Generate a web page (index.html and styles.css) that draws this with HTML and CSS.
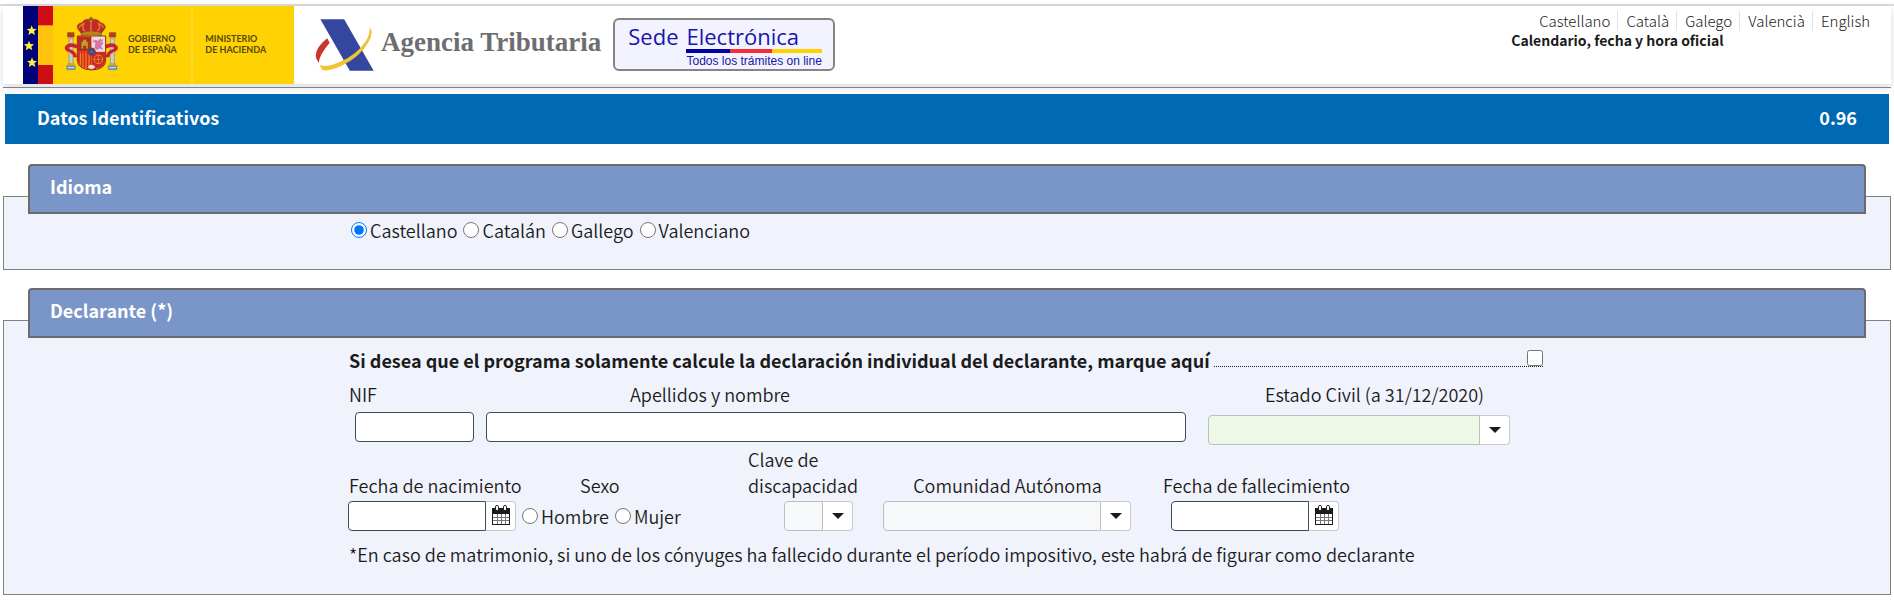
FILE: index.html
```html
<!DOCTYPE html>
<html lang="es">
<head>
<meta charset="utf-8">
<title>Datos Identificativos - Agencia Tributaria</title>
<link rel="stylesheet" href="styles.css">
</head>
<body>
<div class="page">
  <header class="masthead">
    <svg class="logo-gobierno" viewBox="69 18 813 234" role="img" aria-label="Gobierno de España, Ministerio de Hacienda">
      <rect x="69" y="18" width="813" height="234" fill="#ffd204"/>
      <rect x="69" y="18" width="45" height="234" fill="#000078"/>
      <rect x="114" y="18" width="45" height="234" fill="#cd0e14"/>
      <rect x="114" y="76" width="45" height="119" fill="#ffc20e"/>
      <g fill="#ffee3c">
        <path id="star" d="M95 76l4 10 11 1-8 7 3 11-10-6-10 6 3-11-8-7 11-1z"/>
        <use href="#star" x="-8" y="46"/>
        <use href="#star" x="1" y="96"/>
      </g>
      <rect x="574" y="18" width="4" height="234" fill="#ffdc3c"/>
      <g stroke="#6d4a12" stroke-width="1.5">
        <path d="M246 104l-14-20q-2-14 14-16 8-14 27-9 19-5 28 9 15 2 15 16l-15 20q-27-8-55 0z" fill="#c9262b"/>
        <path d="M244 98q29-10 60 0v9q-30-7-60 0z" fill="#b9851c"/>
        <path d="M273 94V62M255 94q-13-12-2-25M292 94q13-12 2-25M237 83q4-9 14-12M311 83q-4-9-14-12" fill="none" stroke="#c98c25" stroke-width="4"/>
        <path d="M273 50v14M267 55h12" stroke="#7a5a18" stroke-width="3"/>
        <circle cx="273" cy="64" r="4" fill="#d9a11c"/>
      </g>
      <g>
        <path id="pillar" d="M207 112h12v80h-12z" fill="#c9ced0" stroke="#7d868c" stroke-width="2"/>
        <use href="#pillar" x="124"/>
        <path d="M203 98h19v13h-19zM328 98h19v13h-19z" fill="#c8322c" stroke="#74500f" stroke-width="2"/>
        <path d="M204 112h17v6h-17zM329 112h17v6h-17z" fill="#dca626"/>
        <path d="M203 190h20v6h-20zM328 190h20v6h-20z" fill="#d9a11c"/>
        <path d="M200 197h26v12h-26zM325 197h26v12h-26z" fill="#6c94b8" stroke="#4d6c8c"/>
        <path d="M203 203h20M328 203h20" stroke="#dceaf3" stroke-width="3"/>
        <path d="M232 141q-17-10-28-3-10 8 4 14 16 6 18 20M316 141q17-10 28-3 10 8-4 14-16 6-18 20" fill="none" stroke="#c9242c" stroke-width="11"/>
        <path d="M205 156l13 9M343 156l-13 9" stroke="#f1b9a6" stroke-width="3"/>
      </g>
      <path d="M232 108h85v72q0 28-42 30-43-2-43-30z" fill="#d3a51d" stroke="#8b2a1c" stroke-width="3"/>
      <path d="M234 110h40v45h-40z" fill="#c8232b"/>
      <path d="M275 110h40v45h-40z" fill="#eadfe4"/>
      <path d="M234 156h40v52q-40-3-40-28z" fill="#d9261f"/>
      <path d="M275 156h40v24q0 25-40 28z" fill="#d0272a"/>
      <path d="M243 147v-23h5v-6h12v6h5v23h-8v-9h-6v9z" fill="#c99a26" stroke="#67430f" stroke-width="2"/>
      <path d="M285 144q4-15 1-23l8 3 8-8 3 7-8 7 12-1-7 9 6 10-10-4-6 5zM280 119l6 5-6 3M309 117l-4 17" fill="#dd74a8" stroke="#c7629a" stroke-width="2"/>
      <path d="M241 158v38M249 158v45M258 158v48M267 158v50" stroke="#efa01b" stroke-width="3"/>
      <circle cx="295" cy="178" r="13" fill="none" stroke="#df9120" stroke-width="3"/>
      <path d="M295 166v24M283 178h24" stroke="#e49b20" stroke-width="2"/>
      <circle cx="275" cy="155" r="11" fill="#23539c" stroke="#b92535" stroke-width="3"/>
      <circle cx="275" cy="155" r="4" fill="#50833e"/>
      <path d="M263 201q12-14 23 0-11 12-23 0z" fill="#eee2c7"/>
      <g class="ministry-name">
        <text x="384" y="127">GOBIERNO</text>
        <text x="384" y="158">DE ESPAÑA</text>
        <text x="616" y="127">MINISTERIO</text>
        <text x="616" y="158">DE HACIENDA</text>
      </g>
    </svg>
    <a class="agency" href="#">
      <svg class="agency-mark" viewBox="46 52 176 160" aria-hidden="true">
        <path d="M82 112q-41 34-32 60l7 14q2-26 33-61z" fill="#c6362e"/>
        <path d="M62 55h71l88 154h-71z" fill="#35469f"/>
        <path d="M208 78q15 15-2 45-26 45-82 72-41 18-57 11l-8-14q22 8 62-10 50-22 75-60 16-23 12-44z" fill="#edc437"/>
      </svg>
      <span class="agency-name">Agencia Tributaria</span>
    </a>
    <a class="sede" href="#">
      <span class="sede-title">Sede</span>
      <span class="sede-main">
        <span class="sede-title">Electrónica</span>
        <span class="sede-stripe"></span>
        <span class="sede-tagline">Todos los trámites on line</span>
      </span>
    </a>
    <div class="tools">
      <nav class="languages" aria-label="Idiomas">
        <a href="#">Castellano</a>
        <a href="#">Català</a>
        <a href="#">Galego</a>
        <a href="#">Valencià</a>
        <a href="#">English</a>
      </nav>
      <a class="calendar-link" href="#">Calendario, fecha y hora oficial</a>
    </div>
  </header>

  <main>
    <div class="title-bar">
      <h1>Datos Identificativos</h1>
      <span>0.96</span>
    </div>

    <section class="panel">
      <h2>Idioma</h2>
      <div class="panel-body radios" role="radiogroup" aria-label="Idioma">
        <label><input type="radio" name="idioma" checked>Castellano</label>
        <label><input type="radio" name="idioma">Catalán</label>
        <label><input type="radio" name="idioma">Gallego</label>
        <label><input type="radio" name="idioma">Valenciano</label>
      </div>
    </section>

    <section class="panel">
      <h2>Declarante (*)</h2>
      <form class="panel-body">
        <div class="single-return">
          <label for="individual">Si desea que el programa solamente calcule la declaración individual del declarante, marque aquí</label>
          <span class="leader"><input type="checkbox" id="individual"></span>
        </div>

        <div class="row identity">
          <div class="field nif">
            <label for="nif">NIF</label>
            <input type="text" id="nif">
          </div>
          <div class="field name">
            <label for="nombre">Apellidos y nombre</label>
            <input type="text" id="nombre">
          </div>
          <div class="field status">
            <label for="estado">Estado Civil (a 31/12/2020)</label>
            <div class="combo required">
              <select id="estado"><option></option></select>
              <button type="button" aria-label="Abrir estado civil"><svg class="arrow" viewBox="0 0 12 6"><path d="M0 0h12L6 6z"/></svg></button>
            </div>
          </div>
        </div>

        <div class="row details">
          <div class="field">
            <label for="nacimiento">Fecha de nacimiento</label>
            <div class="combo date">
              <input type="text" id="nacimiento">
              <button type="button" aria-label="Elegir fecha de nacimiento"><svg class="calendar" viewBox="0 0 18 20"><path d="M0 3h18v17H0z" fill="#1b1b1b"/><path d="M1 9h16v10H1z" fill="#fff"/><path d="M5.500 9v10M9.500 9v10M13.500 9v10M1 12.500h16M1 15.500h16" stroke="#777"/><path d="M3.500 1.500q0-1 1.500-1t1.500 1v3q0 1-1.500 1t-1.500-1zM11.500 1.500q0-1 1.500-1t1.500 1v3q0 1-1.500 1t-1.500-1z" fill="#fff" stroke="#1b1b1b"/></svg></button>
            </div>
          </div>
          <div class="field sex" role="radiogroup" aria-labelledby="sexo">
            <span class="caption" id="sexo">Sexo</span>
            <div class="radios">
              <label><input type="radio" name="sexo">Hombre</label>
              <label><input type="radio" name="sexo">Mujer</label>
            </div>
          </div>
          <div class="field disability">
            <label for="clave">Clave de discapacidad</label>
            <div class="combo">
              <select id="clave"><option></option></select>
              <button type="button" aria-label="Abrir clave de discapacidad"><svg class="arrow" viewBox="0 0 12 6"><path d="M0 0h12L6 6z"/></svg></button>
            </div>
          </div>
          <div class="field region">
            <label for="comunidad">Comunidad Autónoma</label>
            <div class="combo">
              <select id="comunidad"><option></option></select>
              <button type="button" aria-label="Abrir comunidad autónoma"><svg class="arrow" viewBox="0 0 12 6"><path d="M0 0h12L6 6z"/></svg></button>
            </div>
          </div>
          <div class="field death">
            <label for="fallecimiento">Fecha de fallecimiento</label>
            <div class="combo date">
              <input type="text" id="fallecimiento">
              <button type="button" aria-label="Elegir fecha de fallecimiento"><svg class="calendar" viewBox="0 0 18 20"><path d="M0 3h18v17H0z" fill="#1b1b1b"/><path d="M1 9h16v10H1z" fill="#fff"/><path d="M5.500 9v10M9.500 9v10M13.500 9v10M1 12.500h16M1 15.500h16" stroke="#777"/><path d="M3.500 1.500q0-1 1.500-1t1.500 1v3q0 1-1.500 1t-1.500-1zM11.500 1.500q0-1 1.500-1t1.500 1v3q0 1-1.500 1t-1.500-1z" fill="#fff" stroke="#1b1b1b"/></svg></button>
            </div>
          </div>
        </div>

        <p class="note">*En caso de matrimonio, si uno de los cónyuges ha fallecido durante el período impositivo, este habrá de figurar como declarante</p>
      </form>
    </section>
  </main>
</div>
</body>
</html>
```
FILE: styles.css
```css
* { box-sizing: border-box; }

body {
  margin: 0;
  padding-top: 4px;
  background: #fff;
  color: #1b1b1b;
  font-family: "Noto Sans CJK SC", "Noto Sans", sans-serif;
  font-size: 18px;
  font-weight: 350;
  line-height: 26px;
}

a { color: inherit; text-decoration: none; }

.page {
  border-top: 2px solid #dcdcdf;
  padding: 0 3px 3px;
}

/* Masthead */
.masthead {
  display: flex;
  align-items: flex-start;
  height: 78px;
  padding: 0 21px 0 20px;
  background: #fff;
  box-shadow: 0 3px 8px rgba(0, 0, 0, 0.15);
}

.logo-gobierno { width: 271px; height: 78px; }

.ministry-name text {
  fill: #55460a;
  font-family: Lato, sans-serif;
  font-size: 27px;
  font-weight: 700;
}

.agency {
  display: flex;
  gap: 7px;
  margin: 12px 0 0 21px;
}

.agency-mark { width: 59px; height: 54px; }

.agency-name {
  color: #6d6e70;
  font-family: "Liberation Serif", serif;
  font-size: 27px;
  font-weight: 700;
  line-height: 48px;
  white-space: nowrap;
}

.sede {
  display: flex;
  gap: 8px;
  width: 222px;
  height: 53px;
  margin: 12px 0 0 12px;
  padding: 1px 8px 0 13px;
  border: 2px solid #858588;
  border-radius: 6px;
  background: #f3f3ff;
  color: #1616a8;
  font-family: "Open Sans", "Noto Sans", sans-serif;
  font-weight: 400;
  white-space: nowrap;
}

.sede-main { display: flex; flex-direction: column; }

.sede-title { font-size: 22px; line-height: 30px; }

.sede-stripe {
  flex: none;
  width: 136px;
  height: 4px;
  margin-top: -2px;
  background: linear-gradient(to right, #0000a0 0 32%, #fa2d37 32% 63%, #ffd200 63%);
}

.sede-tagline {
  font-family: "Liberation Sans", sans-serif;
  font-size: 12px;
  line-height: 16px;
}

.tools {
  display: flex;
  flex-direction: column;
  margin: 5px 0 0 auto;
  font-size: 14px;
  line-height: 18px;
}

.languages {
  display: flex;
  padding-left: 20px;
  font-size: 15px;
  font-weight: 300;
  line-height: 20px;
}

.languages a { padding: 0 7px 0 8px; border-left: 1px solid #dbe3f0; }
.languages a:first-child { border-left: 0; }
.languages a:last-child { padding-right: 0; }

.calendar-link { font-weight: 700; }

/* Title bar */
main {
  margin-top: 3px;
  padding-top: 6px;
  border-top: 1px solid #808080;
}

.title-bar {
  display: flex;
  justify-content: space-between;
  margin: 0 2px 52px;
  padding: 10px 32px 14px;
  background: #0069b4;
  color: #fff;
  font-weight: 700;
}

h1, h2 { margin: 0; font-size: 18px; font-weight: 700; line-height: 26px; }

/* Panels */
.panel {
  margin-bottom: 50px;
  border: 1px solid #808080;
  background: #f0f3fb;
}

.panel:last-child { margin-bottom: 0; }

.panel h2 {
  margin: -33px 24px 0;
  padding: 7px 20px 13px;
  border: 2px solid #6b6b6b;
  border-radius: 4px 4px 0 0;
  background: #7a96c8;
  color: #fff;
}

.panel-body {
  width: 64%;
  max-width: 1198px;
  margin: 0 auto;
  padding: 3px 0 26px;
}

/* Controls */
input[type="radio"], input[type="checkbox"] { width: 16px; height: 16px; margin: 0; }

.radios { display: flex; gap: 6px; }
.radios label { display: flex; align-items: center; gap: 3px; }
.radios.panel-body { padding-left: 3px; }

input[type="text"], select, .combo button {
  height: 30px;
  border: 1px solid #414a57;
  border-radius: 4px;
  background: #fff;
  font: inherit;
}

input[type="text"] { width: 100%; padding: 0 6px; }

.combo { display: flex; }

.combo select {
  flex: 1;
  min-width: 0;
  appearance: none;
  border-color: #bdbec2;
  border-radius: 4px 0 0 4px;
  background: #f7f8fa;
}

.combo.required select { background: #edf8e7; }

.combo.date input { width: 138px; border-radius: 4px 0 0 4px; }

.combo button {
  display: flex;
  align-items: center;
  justify-content: center;
  width: 30px;
  padding: 0;
  border-color: #c9cacd;
  border-left: 0;
  border-radius: 0 4px 4px 0;
}

.combo.date button { padding-bottom: 2px; }

.arrow { width: 12px; height: 6px; fill: #1b1b1b; }
.calendar { width: 18px; height: 20px; }

/* Declarant form */
.single-return { display: flex; padding-top: 6px; padding-right: 3px; font-weight: 700; }
.single-return label { padding-left: 1px; }

.leader {
  flex: 1;
  height: 20px;
  margin-left: 4px;
  border-bottom: 1px dotted #1b1b1b;
}

.leader input { display: block; margin: 3px 0 0 auto; }

.row { display: grid; }
.field { display: flex; flex-direction: column; justify-content: flex-end; }

.identity {
  grid-template-columns: 126fr 712fr 360fr;
  padding-top: 8px;
}

.identity .field { justify-content: flex-start; }
.identity .field label { padding-bottom: 5px; }
.nif label { padding-left: 1px; }
.nif input[type="text"] { width: calc(100% - 7px); margin-left: 7px; }
.name { padding: 0 0 0 12px; }
.name label { padding-left: 144px; }
.status { padding: 0 36px 0 22px; }
.status label { padding-right: 26px; text-align: right; }
.status .combo { padding-top: 3px; }

.details {
  grid-template-columns: 174fr 226fr 110fr 305fr 383fr;
  padding-top: 1px;
}

.details label, .caption { padding-left: 1px; }
.details .combo { padding-top: 3px; }

.sex .caption { padding-left: 58px; }
.sex .radios { height: 33px; padding-top: 3px; }
.sex .radios label { padding-left: 0; }

.disability label { width: 110px; padding-left: 0; }
.disability .combo { width: 69px; margin-left: 36px; }

.region { padding: 0 32px 0 25px; }
.region label { text-align: center; }

.death label { padding-left: 0; }
.death .combo { margin-left: 8px; }

.note { margin: 0; padding: 10px 0 1px 1px; }
```
